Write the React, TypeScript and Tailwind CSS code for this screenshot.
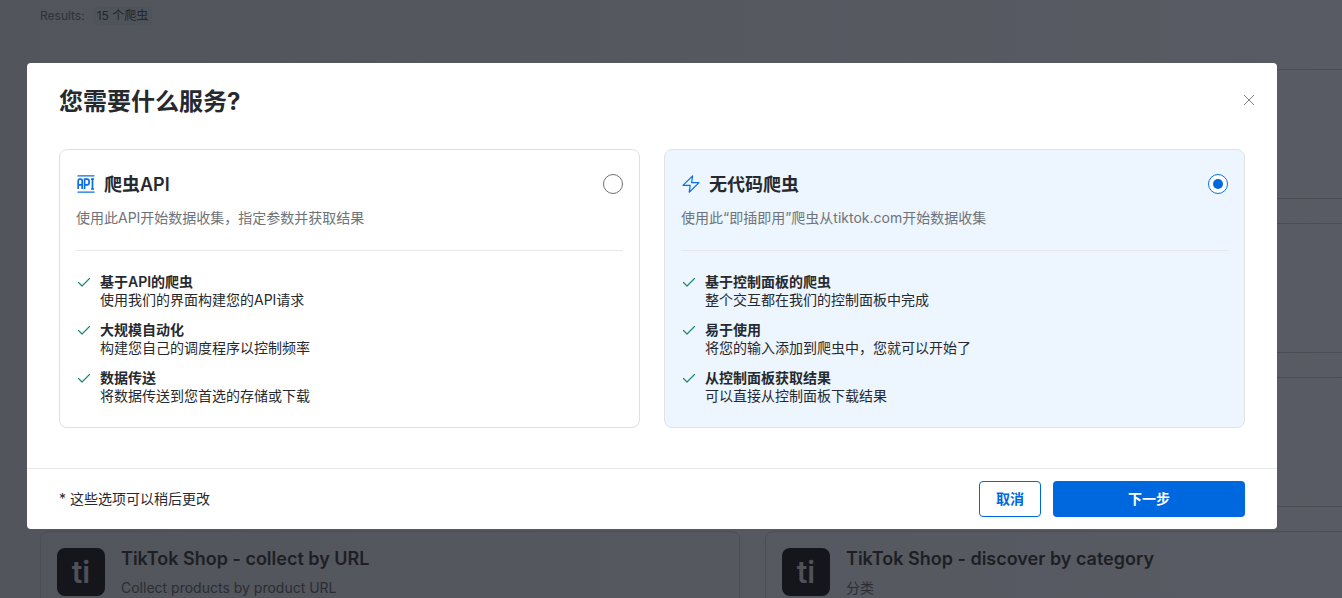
const cjk = "font-['Inter','Noto_Sans_CJK_SC',sans-serif]";

function Check() {
  return (
    <svg width="16" height="16" viewBox="0 0 16 16" fill="none" className="mt-[1px] shrink-0 text-[#1f8a78]">
      <path d="M2.5 8.5 L6 12 L13.5 4.5" stroke="currentColor" strokeWidth="1.2" strokeLinecap="round" strokeLinejoin="round" />
    </svg>
  );
}

function ApiIcon() {
  return (
    <svg width="18" height="18" viewBox="0 0 18 18" fill="none" className="ml-[1px] shrink-0 text-[#0a6fe0]">
      <path d="M0.5 0.8H17.5M0.5 17.2H17.5" stroke="currentColor" strokeWidth="1.3" />
      <path d="M1.2 14V5.8Q1.2 4.2 2.8 4.2H3.6Q5.2 4.2 5.2 5.8V14M1.2 9.8H5.2" stroke="currentColor" strokeWidth="1.7" />
      <path d="M7.6 14V4.2H10.2Q12.2 4.2 12.2 7T10.2 9.9H7.6" stroke="currentColor" strokeWidth="1.7" />
      <path d="M14 4.2H17M15.5 4.2V14M14 14H17" stroke="currentColor" strokeWidth="1.7" />
    </svg>
  );
}

function Bolt() {
  return (
    <svg width="18" height="18" viewBox="0 0 18 18" fill="none" className="ml-[1px] shrink-0 text-[#0a6fe0]">
      <path d="M10.6 0.8 L1 10.4 H8.2 L7.2 17.2 L17 7.6 H9.6 Z" stroke="currentColor" strokeWidth="1.2" strokeLinejoin="round" />
    </svg>
  );
}

function Feature({ title, text }: { title: string; text: string }) {
  return (
    <div className="flex gap-2">
      <Check />
      <div className="text-[14px] leading-[18px] text-[#26292e]">
        <div className="font-semibold">{title}</div>
        <div>{text}</div>
      </div>
    </div>
  );
}

function Option({
  icon,
  title,
  desc,
  features,
  selected,
}: {
  icon: React.ReactNode;
  title: string;
  desc: string;
  features: [string, string][];
  selected?: boolean;
}) {
  return (
    <div
      className={
        selected
          ? "h-[279px] rounded-lg border border-[#dfe3e8] bg-[#edf5fe] px-4 pt-6"
          : "h-[279px] rounded-lg border border-[#dfe0e2] bg-white px-4 pt-6"
      }
    >
      <div className="flex h-5 items-center gap-[9px]">
        {icon}
        <div className="flex-1 pt-[2px] text-[18px] leading-5 font-semibold text-[#26292e]">{title}</div>
        {selected ? (
          <div className="flex h-5 w-5 items-center justify-center rounded-full border border-[#0a6fe0] bg-white">
            <div className="h-[10px] w-[10px] rounded-full bg-[#0068de]" />
          </div>
        ) : (
          <div className="h-5 w-5 rounded-full border border-[#6b7077] bg-white" />
        )}
      </div>
      <div className="mt-[14px] text-[14px] leading-5 text-[#6e7379]">{desc}</div>
      <div className="mt-[22px] border-t border-[#e6e8ea] pt-[22px]">
        <div className="flex flex-col gap-3">
          {features.map(([t, d]) => (
            <Feature key={t} title={t} text={d} />
          ))}
        </div>
      </div>
    </div>
  );
}

function BgCard({ title, sub }: { title?: string; sub?: string }) {
  return (
    <div className="h-[130px] rounded-lg border border-[#4a4d54] p-4">
      {title && (
        <div className="flex gap-4">
          <div className="flex h-12 w-12 items-center justify-center rounded-lg bg-[#15161c] text-[30px] font-semibold text-[#4e5157]">
            ti
          </div>
          <div>
            <div className="-mt-[1px] text-[18px] leading-6 font-semibold text-[#1d1f24]">{title}</div>
            <div className="mt-[7px] text-[14px] leading-5 text-[#2b2d33]">{sub}</div>
          </div>
        </div>
      )}
    </div>
  );
}

export default function App() {
  return (
    <div className={`relative h-[598px] w-[1342px] overflow-hidden bg-linear-to-r from-[#52555b] to-[#585b63] ${cjk}`}>
      <div className="flex h-8 items-center gap-2 pl-10 text-[12px] text-[#2f3238]">
        <span>Results:</span>
        <span className="rounded bg-[#4f535a] px-1 text-[#23262c]">15 个爬虫</span>
      </div>
      <div className="mt-[37px] grid w-[1465px] grid-cols-2 gap-x-[25px] gap-y-[24px] pl-10">
        <BgCard />
        <BgCard />
        <BgCard />
        <BgCard />
        <BgCard />
        <BgCard />
        <BgCard title="TikTok Shop - collect by URL" sub="Collect products by product URL" />
        <BgCard title="TikTok Shop - discover by category" sub="分类" />
      </div>

      <div className="absolute top-[63px] left-[27px] flex h-[466px] w-[1250px] flex-col rounded bg-white">
        <div className="relative flex-1 px-8 pt-[23px]">
          <div className="text-[24px] leading-8 font-bold text-[#26292e]">您需要什么服务?</div>
          <svg width="16" height="16" viewBox="0 0 16 16" fill="none" className="absolute top-[29px] right-[20px] text-[#7b7f85]">
            <path d="M3 3L13 13M13 3L3 13" stroke="currentColor" strokeWidth="1" />
          </svg>
          <div className="mt-[31px] grid grid-cols-2 gap-6">
            <Option
              icon={<ApiIcon />}
              title="爬虫API"
              desc="使用此API开始数据收集，指定参数并获取结果"
              features={[
                ["基于API的爬虫", "使用我们的界面构建您的API请求"],
                ["大规模自动化", "构建您自己的调度程序以控制频率"],
                ["数据传送", "将数据传送到您首选的存储或下载"],
              ]}
            />
            <Option
              selected
              icon={<Bolt />}
              title="无代码爬虫"
              desc="使用此“即插即用”爬虫从tiktok.com开始数据收集"
              features={[
                ["基于控制面板的爬虫", "整个交互都在我们的控制面板中完成"],
                ["易于使用", "将您的输入添加到爬虫中，您就可以开始了"],
                ["从控制面板获取结果", "可以直接从控制面板下载结果"],
              ]}
            />
          </div>
        </div>
        <div className="flex h-[61px] items-center justify-between border-t border-[#e6e8ea] px-8">
          <div className="-mt-[2px] text-[14px] text-[#26292e]">* 这些选项可以稍后更改</div>
          <div className="flex gap-3">
            <button className="h-9 w-[62px] rounded border border-[#0068de] bg-white pb-[2px] text-[14px] font-semibold text-[#0068de]">取消</button>
            <button className="h-9 w-[192px] rounded bg-[#0068de] pb-[2px] text-[14px] font-semibold text-white">下一步</button>
          </div>
        </div>
      </div>
    </div>
  );
}
